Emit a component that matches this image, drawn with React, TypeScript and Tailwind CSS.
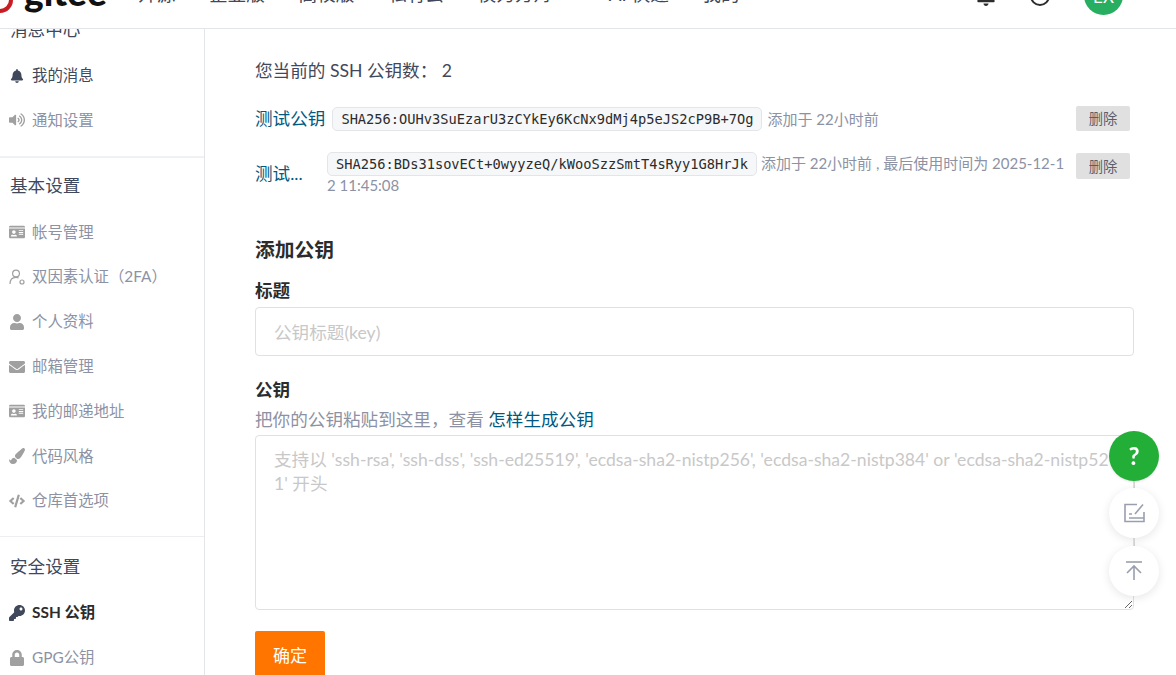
import React from 'react';
import { FaBell, FaVolumeUp, FaIdCard, FaUser, FaEnvelope, FaPaintBrush, FaCode, FaKey, FaLock } from 'react-icons/fa';

const font = "font-['Lato','Noto_Sans_CJK_SC',sans-serif]";

const navItems = ['开源', '企业版', '高校版', '私有云', '模力方舟'];

// person outline with the small ring, react-icons has nothing close
function TwoFactorIcon({ className }: { className?: string }) {
  return (
    <svg viewBox="0 0 16 16" fill="none" stroke="currentColor" strokeWidth="1.2" className={className}>
      <circle cx="7" cy="4.5" r="3.4" />
      <path d="M1 15c0-4 2.4-6.6 6-6.6 1 0 1.900.2 2.600.6" />
      <circle cx="13" cy="13" r="2" />
    </svg>
  );
}

const basicItems = [
  { label: '帐号管理', icon: FaIdCard },
  { label: '双因素认证（2FA）', icon: TwoFactorIcon },
  { label: '个人资料', icon: FaUser },
  { label: '邮箱管理', icon: FaEnvelope },
  { label: '我的邮递地址', icon: FaIdCard },
  { label: '代码风格', icon: FaPaintBrush },
  { label: '仓库首选项', icon: FaCode },
];

function MenuItem({ label, icon: Icon, active }: { label: string; icon: React.ComponentType<{ className?: string }>; active?: boolean }) {
  return (
    <div className={`flex h-[44.8px] items-center text-[15.4px] ${active ? 'font-bold text-[#2c2c2c]' : 'text-[#8c92a4]'}`}>
      <span className="flex w-[32px] justify-center pl-[1px]">
        <Icon className={`size-[16px] ${active ? 'text-[#40485b]' : 'text-[#a0a0a0]'}`} />
      </span>
      <span>{label}</span>
    </div>
  );
}

function Sidebar() {
  return (
    <aside className="h-[647px] w-[205px] shrink-0 overflow-hidden border-r border-[#e3e5ea]">
      <div className="-mt-[11px] pl-[10px] text-[17.6px] leading-[24px] text-[#40485b]">消息中心</div>
      <div className="mt-[11px] flex h-[45px] items-center text-[15.4px] text-[#40485b]">
        <span className="flex w-[32px] justify-center pl-[1px]"><FaBell className="size-[14px]" /></span>
        我的消息
      </div>
      <MenuItem label="通知设置" icon={FaVolumeUp} />
      <div className="mt-[13px] h-[2px] bg-[#f0f1f3]" />
      <div className="mt-[16px] pl-[10px] text-[17.6px] leading-[24px] text-[#40485b]">基本设置</div>
      <div className="mt-[12px]">
        {basicItems.map((item) => (
          <MenuItem key={item.label} label={item.label} icon={item.icon} />
        ))}
      </div>
      <div className="mt-[13px] h-[1px] bg-[#eceef1]" />
      <div className="mt-[18px] pl-[10px] text-[17.6px] leading-[24px] text-[#40485b]">安全设置</div>
      <div className="mt-[11px]">
        <MenuItem label="SSH 公钥" icon={FaKey} active />
        <MenuItem label="GPG公钥" icon={FaLock} />
      </div>
    </aside>
  );
}

function KeyCode({ children }: { children: string }) {
  return (
    <code className="inline-block rounded-[5px] border border-[#e3e5ea] bg-[#f6f7f9] px-[8px] font-['DejaVu_Sans_Mono',monospace] text-[13.7px] leading-[22px] text-[#2c2c2c]">
      {children}
    </code>
  );
}

function DeleteButton({ tall }: { tall?: boolean }) {
  return (
    <button className={`mr-[4px] w-[54px] rounded-[2px] bg-[#e0e0e0] text-[14.3px] text-[#5a5e6b] ${tall ? 'h-[26px]' : 'h-[25px]'}`}>
      删除
    </button>
  );
}

export default function App() {
  return (
    <div className={`h-[675px] w-[1176px] overflow-hidden bg-white ${font}`}>
      <header className="flex h-[29px] items-start overflow-hidden border-b border-[#e3e5ea]">
        <svg width="14" height="14" viewBox="0 0 14 14" className="shrink-0">
          <path d="M13 0A13 13 0 0 1 0 13V9A9 9 0 0 0 9 0Z" fill="#c71d23" />
        </svg>
        <span className="-mt-[23px] ml-[10px] w-[91px] text-[37px] font-black leading-[30px] text-[#111]">gitee</span>
        <nav className="-mt-[18px] ml-[23px] flex gap-[33.5px] text-[18.7px] leading-[24px] text-[#40485b]">
          {navItems.map((n) => (
            <span key={n}>{n}</span>
          ))}
          <span className="ml-[23px]">AI 快速</span>
          <span>我的</span>
        </nav>
        <div className="-mt-[24px] ml-auto flex items-center gap-[34px] pr-[53px]">
          <FaBell className="size-[20px] text-[#2c2c2c]" />
          <span className="size-[20px] rounded-full border-2 border-[#2c2c2c]" />
          <span className="flex size-[39px] items-center justify-center rounded-full bg-[#27ae60] pt-[3px] text-[17px] text-white">
            EX
          </span>
        </div>
      </header>
      <div className="flex">
        <Sidebar />
        <main className="relative h-[646px] flex-1 overflow-hidden pl-[50px] pr-[42px] text-[#40485b]">
          <div className="mt-[30px] text-[17.6px] leading-[24px]">您当前的 SSH 公钥数： 2</div>
          <div className="mt-[23px] flex items-start justify-between">
            <div className="flex items-center text-[15px] text-[#8c92a4]">
              <span className="mr-[7px] text-[17.6px] text-[#005980]">测试公钥</span>
              <KeyCode>SHA256:OUHv3SuEzarU3zCYkEy6KcNx9dMj4p5eJS2cP9B+7Og</KeyCode>
              <span className="ml-[5px]">添加于 22小时前</span>
            </div>
            <DeleteButton />
          </div>
          <div className="mt-[21px] flex items-start justify-between">
            <div className="-mt-[1px] flex items-center">
              <span className="w-[72px] pt-[2px] text-[17.6px] text-[#005980]">测试...</span>
              <div className="w-[738px] break-all text-[15px] leading-[18px] text-[#8c92a4]">
                <KeyCode>SHA256:BDs31sovECt+0wyyzeQ/kWooSzzSmtT4sRyy1G8HrJk</KeyCode>{' '}
                添加于 22小时前 , 最后使用时间为 2025-12-12 11:45:08
              </div>
            </div>
            <DeleteButton tall />
          </div>
          <h3 className="mt-[42px] text-[19.8px] font-bold leading-[26px] text-[#2c2c2c]">添加公钥</h3>
          <div className="mt-[18px] text-[17.6px] font-bold leading-[22px] text-[#2c2c2c]">标题</div>
          <input
            className="mt-[5px] block h-[49px] w-[879px] rounded-[4px] border border-[#dfe1e6] px-[18px] pt-[2px] text-[17.6px] placeholder:text-[#c8c8c8]"
            placeholder="公钥标题(key)"
          />
          <div className="mt-[23px] text-[17.6px] font-bold leading-[22px] text-[#2c2c2c]">公钥</div>
          <div className="mt-[8px] text-[17.6px] leading-[22px] text-[#8c92a4]">
            把你的公钥粘贴到这里，查看 <span className="text-[#005980]">怎样生成公钥</span>
          </div>
          <textarea
            className="mt-[4px] block h-[175px] w-[879px] break-all rounded-[4px] border border-[#dfe1e6] px-[18px] py-[12px] text-[17.6px] leading-[24px] placeholder:text-[#c8c8c8]"
            placeholder="支持以 'ssh-rsa', 'ssh-dss', 'ssh-ed25519', 'ecdsa-sha2-nistp256', 'ecdsa-sha2-nistp384' or 'ecdsa-sha2-nistp521' 开头"
          />
          <button className="mt-[21px] h-[48px] w-[70px] rounded-[2px] bg-[#ff7500] text-[17px] text-white">确定</button>
        </main>
      </div>

      {/* floating helpers */}
      <div className="fixed left-[1109px] top-[431px] flex w-[50px] flex-col items-center">
        <div className="flex size-[50px] items-center justify-center rounded-full bg-[#22ae37] text-[24px] font-bold text-white shadow-sm">?</div>
        <div className="h-[7px] w-px bg-[#d5d5d5]" />
        <div className="flex size-[50px] items-center justify-center rounded-full bg-white shadow-[0_2px_10px_rgba(0,0,0,0.1)]">
          <svg width="21" height="20" viewBox="0 0 21 20" fill="none" stroke="#9a9fb0" strokeWidth="1.6">
            <path d="M13 1.500H1v17h19V9" />
            <path d="M11 11l8-9.500" />
            <path d="M5 11h3M5 15h15" />
          </svg>
        </div>
        <div className="h-[8px] w-px bg-[#d5d5d5]" />
        <div className="flex size-[50px] items-center justify-center rounded-full bg-white shadow-[0_2px_10px_rgba(0,0,0,0.1)]">
          <svg width="18" height="20" viewBox="0 0 18 20" fill="none" stroke="#9a9fb0" strokeWidth="1.6">
            <path d="M1 1h16" />
            <path d="M9 19V5M2 12l7-7 7 7" />
          </svg>
        </div>
      </div>
    </div>
  );
}
